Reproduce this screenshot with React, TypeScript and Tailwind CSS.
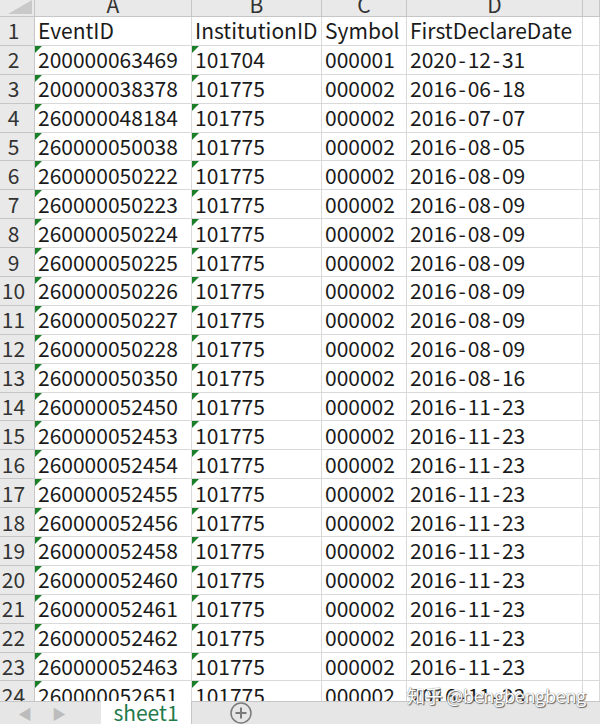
import React from "react";

type Row = [string, string, string, string];

const rows: Row[] = [
  ["EventID", "InstitutionID", "Symbol", "FirstDeclareDate"],
  ["200000063469", "101704", "000001", "2020-12-31"],
  ["200000038378", "101775", "000002", "2016-06-18"],
  ["260000048184", "101775", "000002", "2016-07-07"],
  ["260000050038", "101775", "000002", "2016-08-05"],
  ["260000050222", "101775", "000002", "2016-08-09"],
  ["260000050223", "101775", "000002", "2016-08-09"],
  ["260000050224", "101775", "000002", "2016-08-09"],
  ["260000050225", "101775", "000002", "2016-08-09"],
  ["260000050226", "101775", "000002", "2016-08-09"],
  ["260000050227", "101775", "000002", "2016-08-09"],
  ["260000050228", "101775", "000002", "2016-08-09"],
  ["260000050350", "101775", "000002", "2016-08-16"],
  ["260000052450", "101775", "000002", "2016-11-23"],
  ["260000052453", "101775", "000002", "2016-11-23"],
  ["260000052454", "101775", "000002", "2016-11-23"],
  ["260000052455", "101775", "000002", "2016-11-23"],
  ["260000052456", "101775", "000002", "2016-11-23"],
  ["260000052458", "101775", "000002", "2016-11-23"],
  ["260000052460", "101775", "000002", "2016-11-23"],
  ["260000052461", "101775", "000002", "2016-11-23"],
  ["260000052462", "101775", "000002", "2016-11-23"],
  ["260000052463", "101775", "000002", "2016-11-23"],
  ["260000052651", "101775", "000002", "2016-11-23"],
];

const font = { fontFamily: '"Noto Sans CJK SC", "Noto Sans", sans-serif' };

// Hyphens in dates are drawn with extra room, as the sheet font spaces them.
function DateText({ value }: { value: string }) {
  const parts = value.split("-");
  return (
    <span className="whitespace-nowrap">
      {parts.map((p, i) => (
        <React.Fragment key={i}>
          {i > 0 && <span className="inline-block w-[11px] text-center">-</span>}
          {p}
        </React.Fragment>
      ))}
    </span>
  );
}

// Small corner flag for numbers stored as text.
function ErrorMark() {
  return (
    <span className="absolute left-0 top-0 h-0 w-0 border-t-[7px] border-r-[7px] border-t-[#1b7f2a] border-r-transparent" />
  );
}

function Cell({ children, mark }: { children?: React.ReactNode; mark?: boolean }) {
  return (
    <div className="relative flex items-center overflow-hidden whitespace-nowrap border-b border-r border-[#d9d9d9] pl-[3px] text-[21px] leading-none text-[#1a1a1a]">
      {mark && <ErrorMark />}
      {children}
    </div>
  );
}

export default function App() {
  const cols = "grid grid-cols-[35px_157px_130px_85px_176px_1fr]";
  return (
    <div className="relative flex h-[724px] w-[600px] flex-col overflow-hidden bg-white" style={font}>
      <div className="h-[701px] overflow-hidden">
        {/* column letters */}
        <div className={`${cols} h-[17px] bg-[#e9e9e9]`}>
          <div className="relative border-b border-r border-[#c6c6c6]">
            <svg className="absolute right-[2px] bottom-[2px]" width="24" height="14" viewBox="0 0 24 14">
              <polygon points="24,0 24,14 0,14" fill="#c9c9c9" />
            </svg>
          </div>
          {["A", "B", "C", "D", ""].map((l, i) => (
            <div
              key={i}
              className="flex items-end justify-center overflow-hidden border-b border-r border-[#c6c6c6] text-[21px] leading-none text-[#333]"
            >
              <span className="mb-[1px]">{l}</span>
            </div>
          ))}
        </div>
        {rows.map((r, i) => (
          <div key={i} className={`${cols} h-[28.9px]`}>
            <div className="flex items-center justify-center border-b border-r border-[#c6c6c6] bg-[#e9e9e9] pr-[7px] text-[21px] leading-none text-[#333]">
              {i + 1}
            </div>
            <Cell mark={i > 0}>{r[0]}</Cell>
            <Cell mark={i > 0}>{r[1]}</Cell>
            <Cell>{r[2]}</Cell>
            <Cell>{i > 0 ? <DateText value={r[3]} /> : r[3]}</Cell>
            <Cell />
          </div>
        ))}
      </div>
      {/* sheet tabs */}
      <div className="flex h-[23px] bg-[#e6e6e6]">
        <div className="flex w-[101px] items-center gap-[20px] border-t border-[#c6c6c6] pl-[18px] text-[14px] text-[#bcbcbc]">
          <span>◀</span>
          <span>▶</span>
        </div>
        <div className="flex w-[90px] items-start justify-center bg-white text-[21px] leading-[22px] text-[#237a4b]">
          sheet1
        </div>
        <div className="flex flex-1 items-center border-l border-t border-[#c6c6c6] pl-[38px]">
          <svg width="22" height="22" viewBox="0 0 22 22">
            <circle cx="11" cy="11" r="10" fill="none" stroke="#7a7a7a" strokeWidth="1.5" />
            <path d="M11 5.5v11M5.5 11h11" stroke="#7a7a7a" strokeWidth="2" />
          </svg>
        </div>
      </div>
      <div
        className="absolute left-[407px] top-[686px] whitespace-nowrap text-[18px] leading-none tracking-[-0.3px] text-white"
        style={{ textShadow: "0 0 1px #555, 1px 1px 1px #666" }}
      >
        知乎 @bengbengbeng
      </div>
    </div>
  );
}
